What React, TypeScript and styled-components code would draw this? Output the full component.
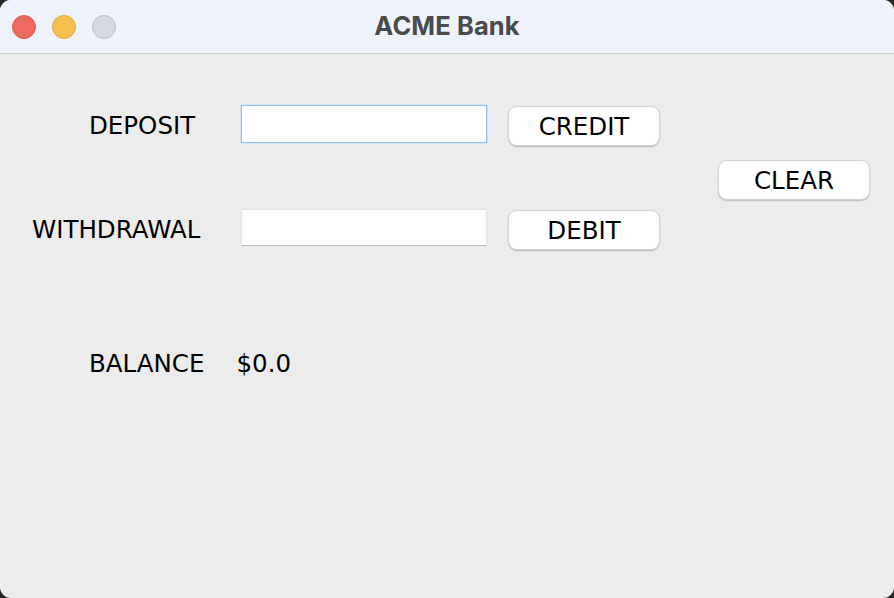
import React from "react";
import styled, { createGlobalStyle } from "styled-components";

const Global = createGlobalStyle`
  html, body { margin: 0; padding: 0; background: #262626; }
  body { width: 894px; height: 598px; overflow: hidden; }
  * { box-sizing: border-box; }
`;

const Window = styled.div`
  width: 894px;
  height: 598px;
  border-radius: 11px;
  overflow: hidden;
  background: #ececec;
  display: flex;
  flex-direction: column;
  font-family: "DejaVu Sans", "Verdana", sans-serif;
`;

const TitleBar = styled.div`
  height: 54px;
  flex: none;
  background: #eef2fa;
  border-bottom: 1px solid #cfcfd1;
  display: grid;
  grid-template-columns: 1fr auto 1fr;
  align-items: center;
  padding: 0 12px;
`;

const Lights = styled.div`
  display: flex;
  gap: 16px;
  align-items: center;
`;

const Light = styled.span<{ $fill: string; $edge: string }>`
  width: 24px;
  height: 24px;
  border-radius: 50%;
  background: ${(p) => p.$fill};
  border: 1px solid ${(p) => p.$edge};
`;

const Title = styled.div`
  font-family: "Inter", "Liberation Sans", sans-serif;
  font-weight: 700;
  font-size: 25.5px;
  color: #4a4a4c;
  letter-spacing: 0.1px;
  transform: translateY(-1px);
`;

const Content = styled.div`
  flex: 1;
  padding-top: 51px;
  display: flex;
  flex-direction: column;
`;

const Form = styled.div`
  display: grid;
  grid-template-columns: 241px 246px 173px 1fr;
  grid-template-rows: 41px 63px 41px;
`;

const Label = styled.div<{ $indent: number; $row: number }>`
  grid-column: 1;
  grid-row: ${(p) => p.$row};
  padding-left: ${(p) => p.$indent}px;
  font-size: 24.5px;
  color: #000;
  display: flex;
  align-items: center;
  white-space: nowrap;
`;

const Field = styled.input<{ $focused?: boolean; $row: number }>`
  grid-column: 2;
  grid-row: ${(p) => p.$row};
  width: 246px;
  height: ${(p) => (p.$focused ? 38 : 37)}px;
  align-self: start;
  background: #fff;
  outline: none;
  font-size: 22px;
  padding: 0 6px;
  ${(p) =>
    p.$focused
      ? `border: 1.5px solid #95bdf0; box-shadow: 0 0 0 0.5px #b9d3f5;`
      : `border: 1px solid #e2e2e2; border-bottom-color: #b9b9b9;`}
`;

const Button = styled.button<{ $row: number }>`
  grid-column: 3;
  grid-row: ${(p) => p.$row};
  width: 152px;
  height: 40px;
  margin-left: 21px;
  margin-top: 1px;
  background: #fff;
  border: 0.5px solid #d4d4d4;
  border-radius: 9px;
  box-shadow: 0 1px 1.5px rgba(0, 0, 0, 0.22);
  font-family: "DejaVu Sans", "Verdana", sans-serif;
  font-size: 24.5px;
  color: #000;
  padding: 0;
  align-self: start;
`;

const ClearButton = styled(Button)`
  grid-column: 4;
  grid-row: 1 / span 3;
  margin-left: 58px;
  margin-top: 55px;
`;

const BalanceRow = styled.div`
  margin-top: 99px;
  padding-left: 89px;
  display: flex;
  gap: 32px;
  font-size: 24.5px;
  color: #000;
`;

export default function App() {
  return (
    <>
      <Global />
      <Window>
        <TitleBar>
          <Lights>
            <Light $fill="#ee6a5f" $edge="#d9584d" />
            <Light $fill="#f5bf4f" $edge="#dca63f" />
            <Light $fill="#d6d9e0" $edge="#bdbfc5" />
          </Lights>
          <Title>ACME Bank</Title>
          <span />
        </TitleBar>
        <Content>
          <Form>
            <Label $indent={89} $row={1}>DEPOSIT</Label>
            <Field $focused $row={1} />
            <Button $row={1}>CREDIT</Button>
            <ClearButton $row={1}>CLEAR</ClearButton>
            <Label $indent={32} $row={3}>WITHDRAWAL</Label>
            <Field $row={3} />
            <Button $row={3}>DEBIT</Button>
          </Form>
          <BalanceRow>
            <span>BALANCE</span>
            <span>$0.0</span>
          </BalanceRow>
        </Content>
      </Window>
    </>
  );
}
